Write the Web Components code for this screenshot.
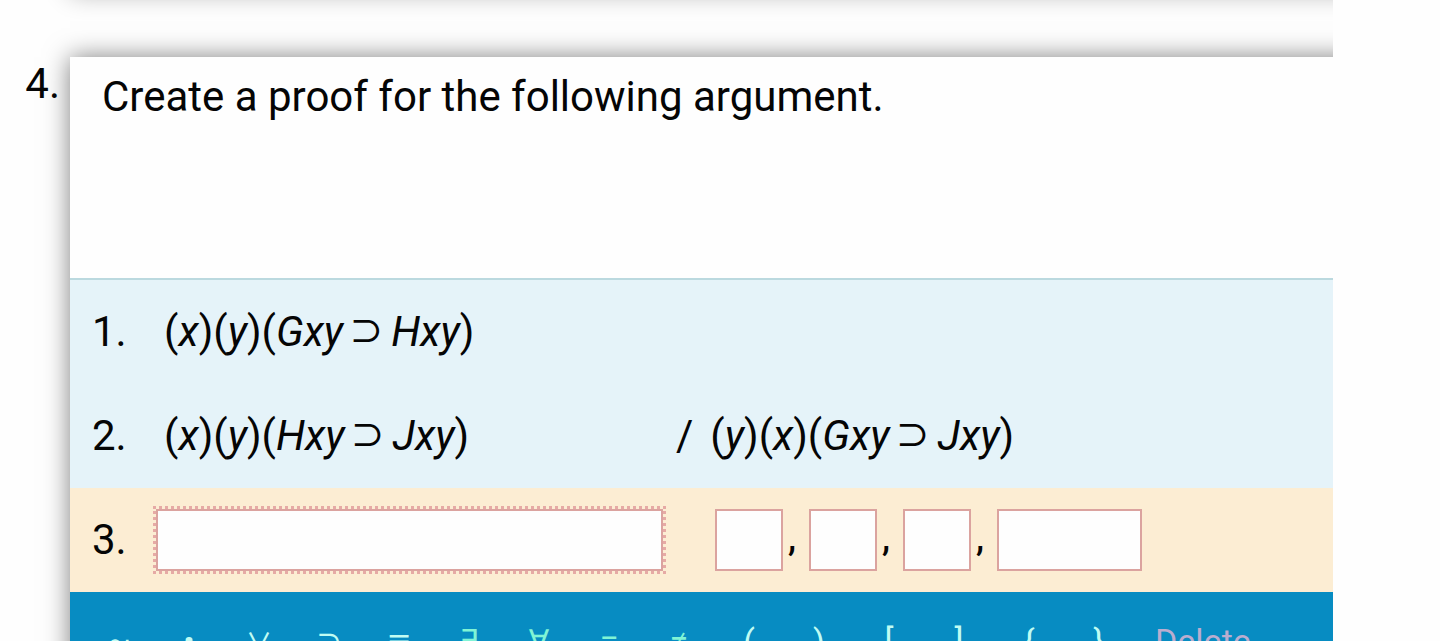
<!DOCTYPE html>
<html lang="en">
<head>
<meta charset="utf-8">
<title>Proof exercise</title>
<style>
  html, body { margin: 0; height: 100%; overflow: hidden; background: #fefefe; }
  body { font-family: Roboto, "DejaVu Sans", sans-serif; font-size: 42px; line-height: 50px; color: #050505; }
</style>
</head>
<body>
<exercise-page></exercise-page>

<template id="exercise-page">
  <style>
    :host { display: block; height: 100%; margin-right: 107px; overflow: hidden; }
    main { display: flex; flex-direction: column; gap: 64px; margin: -107px -40px 0 0; }
  </style>
  <main>
    <exercise-card></exercise-card>
    <exercise-card number="4.">
      <span slot="prompt">Create a proof for the following argument.</span>
      <proof-editor></proof-editor>
    </exercise-card>
  </main>
</template>

<template id="exercise-card">
  <style>
    :host { display: grid; grid-template-columns: 70px 1fr; }
    .number { padding: 2px 10px 0 0; text-align: right; position: relative; z-index: 1; }
    section { background: #fefefe; box-shadow: 0 0 24px rgba(0, 0, 0, .5); min-height: 100px; }
    :host(:not([number])) section { box-shadow: 0 0 24px rgba(0, 0, 0, .32); }
    .prompt { margin: 0; padding: 15px 32px 0; min-height: 206px; }
    :host(:not([number])) .prompt { display: none; }
  </style>
  <div class="number"></div>
  <section>
    <p class="prompt"><slot name="prompt"></slot></p>
    <slot></slot>
  </section>
</template>

<template id="proof-editor">
  <style>
    :host { display: block; }
    .premises { background: #e5f3f9; border-top: 2px solid #bbd9df; }
  </style>
  <div class="premises">
    <proof-line number="1."><logic-formula text="(x)(y)(Gxy ⊃ Hxy)"></logic-formula></proof-line>
    <proof-line number="2."><logic-formula text="(x)(y)(Hxy ⊃ Jxy)"></logic-formula>
      <logic-formula slot="conclusion" text="(y)(x)(Gxy ⊃ Jxy)" conclusion></logic-formula></proof-line>
  </div>
  <proof-entry></proof-entry>
  <symbol-bar></symbol-bar>
</template>

<template id="proof-line">
  <style>
    :host { display: grid; grid-template-columns: 72px 512px 1fr; align-items: center; height: 104px; padding-left: 22px; }
  </style>
  <span class="number"></span>
  <slot></slot>
  <slot name="conclusion"></slot>
</template>

<template id="logic-formula">
  <style>
    :host { display: flex; align-items: center; white-space: pre; }
    .op { font: 500 34px/46px "Noto Sans CJK JP", sans-serif; margin: 0 8px 0 6px; padding-bottom: 4px; }
    .slash { margin-right: 17px; }
    i { font-style: italic; }
  </style>
</template>

<template id="proof-entry">
  <style>
    :host { display: flex; align-items: center; height: 104px; padding-left: 22px; background: #fcedd3; }
    .number { width: 64px; }
    input { box-sizing: border-box; height: 62px; margin: 0; padding: 0 8px; border: 2px solid #dba39f; border-radius: 0; background: #fefefe; font: inherit; color: inherit; }
    .statement { width: 507px; margin-right: 52px; outline: 3px dotted #e6aaa5; }
    .ref { width: 68px; }
    .rule { width: 145px; }
    .comma { width: 18px; padding: 0 8px 4px 0; text-align: center; font-size: 36px; font-weight: 500; }
  </style>
  <span class="number">3.</span>
  <input class="statement" type="text" aria-label="Statement for line 3">
  <input class="ref" type="text" aria-label="First line reference"><span class="comma">,</span>
  <input class="ref" type="text" aria-label="Second line reference"><span class="comma">,</span>
  <input class="ref" type="text" aria-label="Third line reference"><span class="comma">,</span>
  <input class="rule" type="text" aria-label="Rule">
</template>

<template id="symbol-bar">
  <style>
    :host { display: flex; padding: 24px 14px; background: #078cc2; color: #c0fcf3; font-size: 34px; line-height: 50px; }
    button { width: 70px; padding: 0; border: 0; background: none; color: inherit; font: inherit; }
    .logic { font-family: "DejaVu Sans", sans-serif; font-size: 30px; }
    .connective { font-family: "Noto Sans CJK JP", sans-serif; font-size: 26px; font-weight: 500; }
    .quantifier { color: #80f4d5; }
    .delete { width: auto; padding-left: 21px; color: #baadcf; }
  </style>
</template>

<script>
  class TemplateElement extends HTMLElement {
    constructor() {
      super();
      const template = document.getElementById(this.localName);
      this.attachShadow({ mode: "open" }).append(template.content.cloneNode(true));
    }
  }

  class NumberedElement extends TemplateElement {
    connectedCallback() {
      this.shadowRoot.querySelector(".number").textContent = this.getAttribute("number") || "";
    }
  }

  // Sets variables and predicates in italics and leaves punctuation upright.
  class LogicFormula extends TemplateElement {
    connectedCallback() {
      const add = (tag, text, name) => {
        const node = document.createElement(tag);
        node.textContent = text;
        if (name) node.className = name;
        this.shadowRoot.append(node);
      };
      if (this.hasAttribute("conclusion")) add("span", "/", "slash");
      for (const part of this.getAttribute("text").match(/[A-Za-z]+|[()]+|⊃/g)) {
        if (part === "⊃") add("span", part, "op");
        else add(/[A-Za-z]/.test(part) ? "i" : "span", part);
      }
    }
  }

  class SymbolBar extends TemplateElement {
    connectedCallback() {
      const keys = ["~", "•", "∨", "⊃", "≡", "∃", "∀", "=", "≠", "(", ")", "[", "]", "{", "}", "Delete"];
      for (const key of keys) {
        const button = document.createElement("button");
        button.type = "button";
        button.textContent = key;
        if ("≡∃∀".includes(key)) button.classList.add("logic");
        if ("∨⊃".includes(key)) button.classList.add("connective");
        if ("∃∀=≠".includes(key)) button.classList.add("quantifier");
        if (key === "Delete") button.classList.add("delete");
        this.shadowRoot.append(button);
      }
    }
  }

  customElements.define("logic-formula", LogicFormula);
  customElements.define("proof-line", class extends NumberedElement {});
  customElements.define("proof-entry", class extends TemplateElement {});
  customElements.define("symbol-bar", SymbolBar);
  customElements.define("proof-editor", class extends TemplateElement {});
  customElements.define("exercise-card", class extends NumberedElement {});
  customElements.define("exercise-page", class extends TemplateElement {});
</script>
</body>
</html>
